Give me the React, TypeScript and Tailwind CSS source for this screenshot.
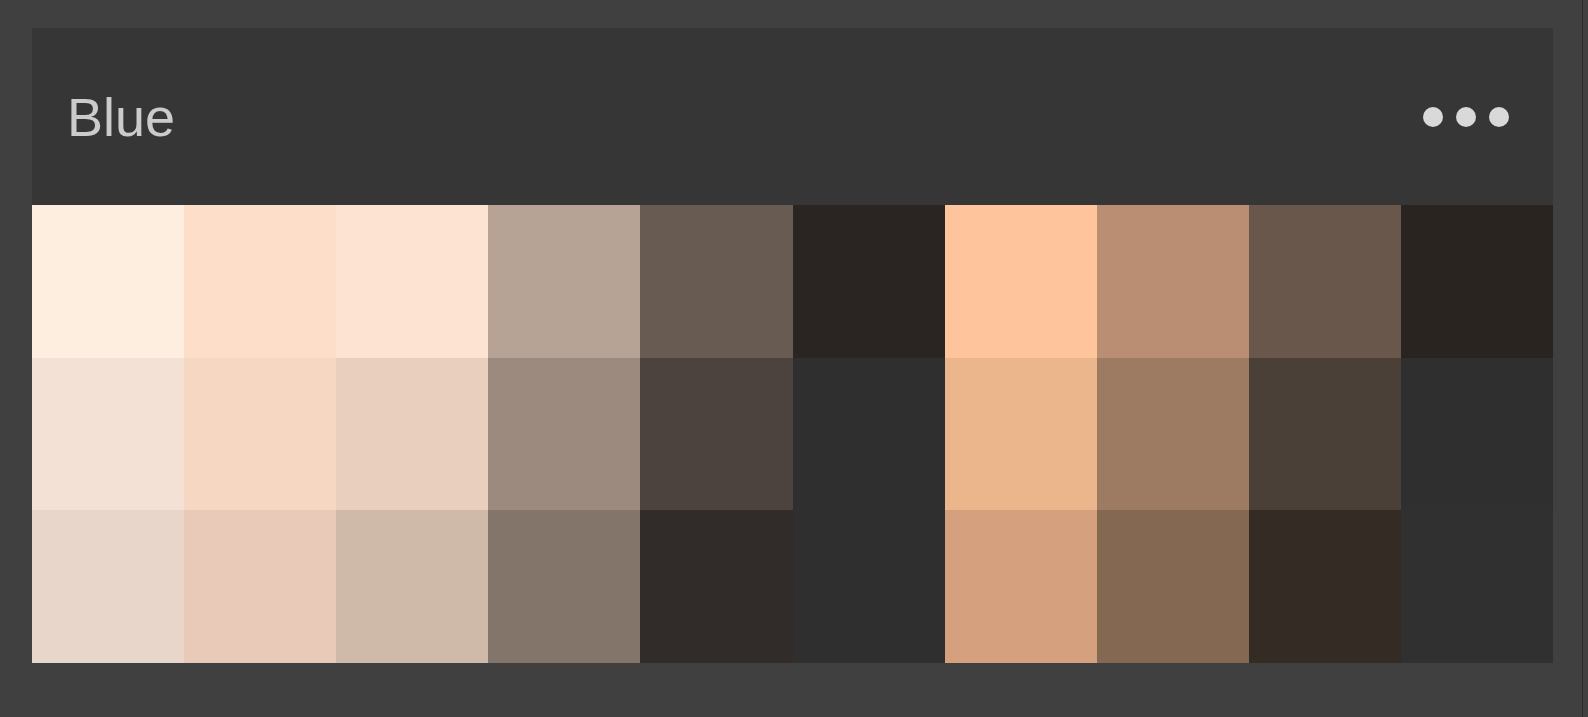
const swatches: string[][] = [
  ["#feeee0", "#fddfc9", "#fde4d2", "#b6a396", "#675b52", "#2a2523", "#fec59c", "#b98e73", "#6a574b", "#2a2420"],
  ["#f2e1d4", "#f6d7c2", "#e9cfbe", "#9b8a7d", "#4c433e", "#2f2f2f", "#ebb68b", "#9c7b62", "#4b4037", "#2f2f2f"],
  ["#e8d6ca", "#e9c9b8", "#cfb9a8", "#84756a", "#312b2a", "#2f2f2f", "#d4a07e", "#846852", "#352b25", "#303030"],
];

const MoreDots = () => (
  <div className="flex items-center gap-[13px]">
    <span className="block h-[20px] w-[20px] rounded-full bg-[#d9d9d9]" />
    <span className="block h-[20px] w-[20px] rounded-full bg-[#d9d9d9]" />
    <span className="block h-[20px] w-[20px] rounded-full bg-[#d9d9d9]" />
  </div>
);

export default function App() {
  return (
    <div className="relative h-[717px] w-[1588px] overflow-hidden bg-[#404040] pl-[32px] pt-[28px]">
      <div className="w-[1521px] bg-[#363636]">
        <div className="flex h-[177px] items-center justify-between pl-[35px] pr-[44px]">
          <span
            className="text-[54px] leading-none text-[#cbcbcb]"
            style={{ fontFamily: '"Liberation Sans", Arial, sans-serif' }}
          >
            Blue
          </span>
          <MoreDots />
        </div>
        <div className="grid h-[458px] grid-cols-10 grid-rows-3">
          {swatches.flat().map((c, i) => (
            <div key={i} style={{ backgroundColor: c }} />
          ))}
        </div>
      </div>
      <div className="absolute right-[5px] top-0 h-full w-px bg-[#2c2c2c]" />
    </div>
  );
}
